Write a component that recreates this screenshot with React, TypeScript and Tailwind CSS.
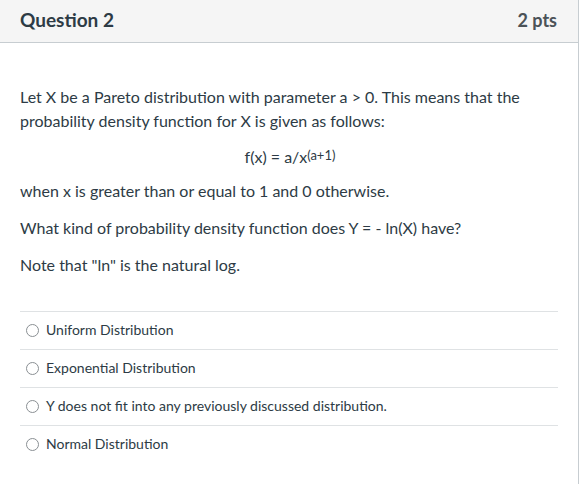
const OPTIONS = [
    "Uniform Distribution",
    "Exponential Distribution",
    "Y does not fit into any previously discussed distribution.",
    "Normal Distribution",
];

function App() {
    return (
        <div className="w-[583px] h-[484px] bg-white overflow-hidden font-['Lato','Liberation_Sans',sans-serif] text-[#2d3b45]">
            <div className="w-[579px] h-[484px] border-r border-[#c7cdd1] flex flex-col">
                <div className="h-[43px] bg-[#f5f5f5] border-b border-[#c7cdd1] flex items-center justify-between pl-[20px] pr-[21px] pb-[2px]">
                    <h2 className="text-[19px] font-bold">Question 2</h2>
                    <span className="text-[18px] font-bold text-[#4b5257]">2 pts</span>
                </div>

                <div className="pt-[42px] px-[20px] text-[16px] leading-[24px]">
                    <p>Let X be a Pareto distribution with parameter a &gt; 0. This means that the probability density function for X is given as follows:</p>
                    <p className="text-center mt-[12px] pl-[2px]">
                        f(x) = a/x<sup className="text-[13px] relative -top-[3px]">(a+1)</sup>
                    </p>
                    <p className="mt-[10px]">when x is greater than or equal to 1 and 0 otherwise.</p>
                    <p className="mt-[13px]">What kind of probability density function does Y = - ln(X) have?</p>
                    <p className="mt-[13px]">Note that "ln" is the natural log.</p>
                </div>

                <div className="mt-[34px] mx-[20px]">
                    {OPTIONS.map((opt) => (
                        <label
                            key={opt}
                            className="h-[38px] flex items-center gap-[7px] pl-[6px] text-[14px] border-t border-[#dfe2e4]"
                        >
                            <span className="w-[13px] h-[13px] rounded-full border border-[#8a8f93] bg-white shrink-0" />
                            <span className="pb-[2px]">{opt}</span>
                        </label>
                    ))}
                </div>
            </div>
        </div>
    );
}

export default App;
